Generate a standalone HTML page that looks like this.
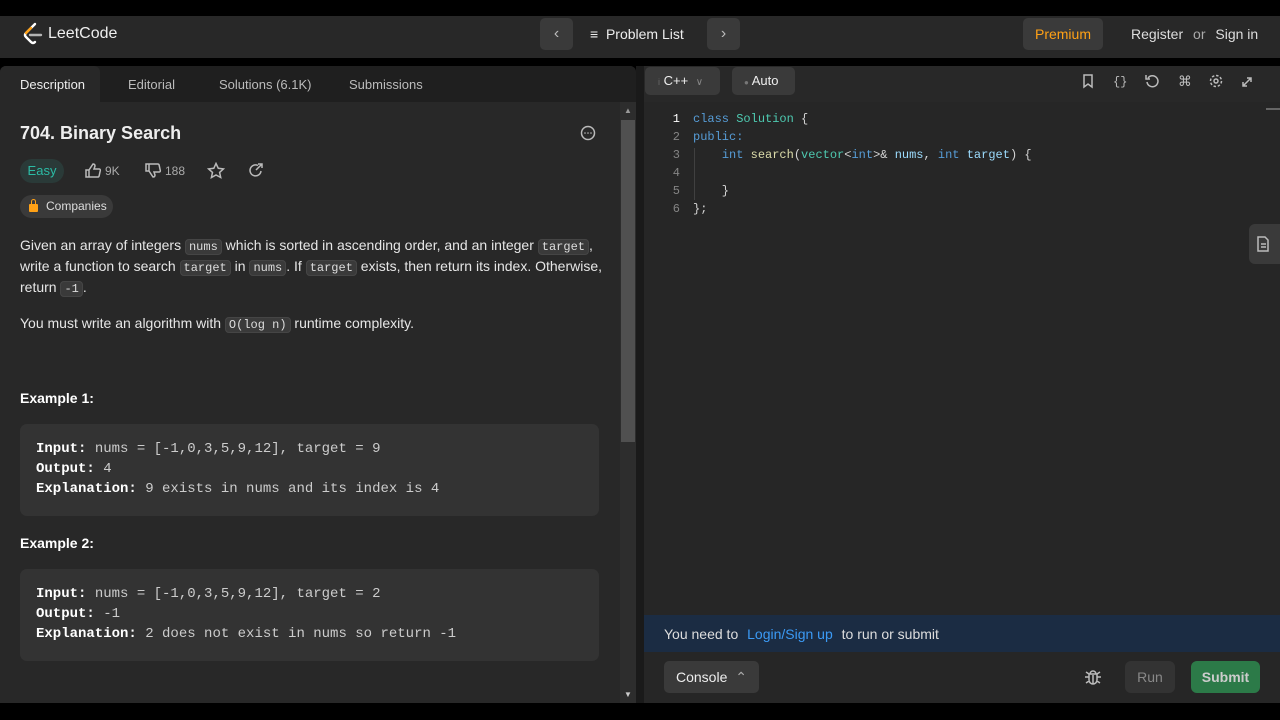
<!DOCTYPE html>
<html><head><meta charset="utf-8"><style>
*{margin:0;padding:0;box-sizing:border-box}
body{width:1280px;height:720px;background:#000;font-family:"Liberation Sans",sans-serif;color:#eee;position:relative;overflow:hidden;font-size:14px}
.abs{position:absolute}
.nav{left:0;top:16px;width:1280px;height:42px;background:#282828}
.btn{background:#3a3a3a;border-radius:5px}
.mono{font-family:"Liberation Mono",monospace}
.code{background:#3a3a3a;border:1px solid #454545;border-radius:4px;font-family:"Liberation Mono",monospace;font-size:12px;padding:0 3px;color:#ddd;line-height:14px}
.ex{left:20px;width:579px;background:#333;border-radius:7px;font-family:"Liberation Mono",monospace;font-size:14px;line-height:20px;padding:15px 16px;color:#ccc}
.ex b{color:#fff}
.ln{color:#858585;width:20px;text-align:right;display:inline-block;margin-right:13px}
.ic{stroke:#bbb;fill:none;stroke-width:1.5}
</style></head><body>
<div class="abs nav"></div>
<svg class="abs" style="left:22px;top:22px" width="22" height="24" viewBox="0 0 22 24"><path d="M13 2 L4 11 Q2 13 4 15 L9 20 Q11 22 13 20" stroke="#fff" stroke-width="2.4" fill="none" stroke-linecap="round"/><path d="M8 13 H19" stroke="#b3b3b3" stroke-width="2.4" stroke-linecap="round"/><path d="M4 11 L9 6" stroke="#ffa116" stroke-width="2.4" stroke-linecap="round"/></svg>
<div class="abs" style="left:48px;top:25px;font-size:16px;color:#eee">LeetCode</div>
<div class="abs btn" style="left:540px;top:18px;width:33px;height:32px;color:#bbb;text-align:center;line-height:32px;font-size:16px">&#8249;</div>
<div class="abs" style="left:590px;top:26px;font-size:14px;color:#eee">&#8801;&nbsp;&nbsp;Problem List</div>
<div class="abs btn" style="left:707px;top:18px;width:33px;height:32px;color:#bbb;text-align:center;line-height:32px;font-size:16px">&#8250;</div>
<div class="abs btn" style="left:1023px;top:18px;width:80px;height:32px;color:#ffa116;text-align:center;line-height:32px;font-size:14px">Premium</div>
<div class="abs" style="left:1131px;top:26px;font-size:14px;color:#ddd">Register <span style="color:#aaa;margin:0 6px">or</span> Sign in</div>

<div class="abs" style="left:0;top:66px;width:636px;height:637px;background:#282828;border-radius:6px 6px 0 0"></div>
<div class="abs" style="left:0;top:66px;width:636px;height:36px;background:#1f1f1f;border-radius:6px 6px 0 0"></div>
<div class="abs" style="left:0;top:66px;width:100px;height:36px;background:#282828;border-radius:6px 6px 0 0"></div>
<div class="abs" style="left:20px;top:77px;font-size:13px;color:#eee">Description</div>
<div class="abs" style="left:128px;top:77px;font-size:13px;color:#bbb">Editorial</div>
<div class="abs" style="left:219px;top:77px;font-size:13px;color:#bbb">Solutions (6.1K)</div>
<div class="abs" style="left:349px;top:77px;font-size:13px;color:#bbb">Submissions</div>
<div class="abs" style="left:620px;top:102px;width:16px;height:601px;background:#2d2d2d"></div>
<div class="abs" style="left:621px;top:120px;width:14px;height:322px;background:#505050"></div>
<div class="abs" style="left:624px;top:106px;font-size:8px;color:#999">&#9650;</div>
<div class="abs" style="left:624px;top:690px;font-size:8px;color:#ccc">&#9660;</div>
<div class="abs" style="left:636px;top:66px;width:8px;height:637px;background:#1a1a1a"></div>

<div class="abs" style="left:20px;top:123px;font-size:18px;font-weight:bold;color:#eee">704. Binary Search</div>
<svg class="abs" style="left:580px;top:125px" width="16" height="16"><circle cx="8" cy="8" r="6.5" class="ic"/><circle cx="5" cy="8" r=".8" fill="#bbb"/><circle cx="8" cy="8" r=".8" fill="#bbb"/><circle cx="11" cy="8" r=".8" fill="#bbb"/></svg>
<div class="abs" style="left:20px;top:159px;width:44px;height:24px;border-radius:12px;background:#2a3a38;color:#2cbba5;font-size:13px;line-height:24px;text-align:center">Easy</div>
<svg class="abs" style="left:84px;top:162px" width="18" height="17"><path class="ic" d="M2 8h3v7H2zM5 8l4-6q2 0 2 2l-1 3h5q1.5 0 1.3 1.5l-1.2 5.5q-.3 1-1.3 1H5"/></svg>
<div class="abs" style="left:105px;top:164px;font-size:12px;color:#aaa">9K</div>
<svg class="abs" style="left:144px;top:162px" width="18" height="17"><path class="ic" d="M2 9h3V2H2zM5 9l4 6q2 0 2-2l-1-3h5q1.5 0 1.3-1.5L15.1 3q-.3-1-1.3-1H5"/></svg>
<div class="abs" style="left:165px;top:164px;font-size:12px;color:#aaa">188</div>
<svg class="abs" style="left:207px;top:162px" width="18" height="17"><path class="ic" d="M9 1.5l2.3 4.8 5.2.6-3.9 3.5 1.1 5.1L9 13l-4.6 2.5 1.1-5.1L1.6 6.9l5.2-.6z"/></svg>
<svg class="abs" style="left:248px;top:162px" width="17" height="17"><path class="ic" d="M13 9a5.5 5.5 0 1 1-3-5.5M10 2h4v4M14 2 8 8"/></svg>
<div class="abs" style="left:20px;top:195px;width:93px;height:23px;border-radius:12px;background:#3a3a3a;font-size:12px;line-height:23px;color:#ddd;padding-left:26px">Companies</div>
<div class="abs" style="left:29px;top:204px;width:9px;height:8px;background:#ffa116;border-radius:1px"></div>
<div class="abs" style="left:31px;top:199px;width:5px;height:6px;border:1.5px solid #ffa116;border-bottom:none;border-radius:3px 3px 0 0"></div>

<div class="abs" style="left:20px;top:235px;width:590px;font-size:14px;line-height:21px;color:#e6e6e6">Given an array of integers <span class="code">nums</span> which is sorted in ascending order, and an integer <span class="code">target</span>, write a function to search <span class="code">target</span> in <span class="code">nums</span>. If <span class="code">target</span> exists, then return its index. Otherwise, return <span class="code">-1</span>.</div>
<div class="abs" style="left:20px;top:315px;font-size:14px;color:#e6e6e6">You must write an algorithm with <span class="code">O(log n)</span> runtime complexity.</div>
<div class="abs" style="left:20px;top:390px;font-size:14px;font-weight:bold;color:#fff">Example 1:</div>
<div class="abs ex" style="top:424px;height:92px"><b>Input:</b> nums = [-1,0,3,5,9,12], target = 9<br><b>Output:</b> 4<br><b>Explanation:</b> 9 exists in nums and its index is 4</div>
<div class="abs" style="left:20px;top:535px;font-size:14px;font-weight:bold;color:#fff">Example 2:</div>
<div class="abs ex" style="top:569px;height:92px"><b>Input:</b> nums = [-1,0,3,5,9,12], target = 2<br><b>Output:</b> -1<br><b>Explanation:</b> 2 does not exist in nums so return -1</div>

<div class="abs" style="left:644px;top:66px;width:636px;height:637px;background:#262626;border-radius:6px 0 0 0"></div>
<div class="abs" style="left:644px;top:66px;width:636px;height:36px;background:#282828"></div>
<div class="abs btn" style="left:645px;top:67px;width:75px;height:28px;font-size:13px;line-height:28px;padding-left:13px;color:#eee"><span style="color:#666;font-size:9px">i</span> C++ <span style="color:#888;font-size:10px;margin-left:4px">&#8744;</span></div>
<div class="abs btn" style="left:732px;top:67px;width:63px;height:28px;font-size:13px;line-height:28px;padding-left:12px;color:#eee"><span style="color:#777;font-size:8px">&#9679;</span> Auto</div>
<svg class="abs" style="left:1080px;top:73px" width="180" height="16">
<path class="ic" d="M4 2h8v12l-4-3-4 3z"/>
<text x="33" y="12" fill="#bbb" font-size="12" font-family="Liberation Mono">{}</text>
<path class="ic" d="M68 5a5.5 5.5 0 1 1-1 4M66 2v4h4"/>
<text x="98" y="13" fill="#bbb" font-size="14" font-family="DejaVu Sans">&#8984;</text>
<circle cx="136" cy="8" r="2" class="ic"/><circle cx="136" cy="8" r="5.5" class="ic" stroke-dasharray="2.5 1.8"/>
<path class="ic" d="M163 13l8-8M167 5h4v4M163 9v4h4"/>
</svg>
<div class="abs" style="left:1266px;top:108px;width:14px;height:2px;background:#666"></div>
<div class="abs" style="left:1249px;top:224px;width:31px;height:40px;background:#3a3a3a;border-radius:6px 0 0 6px"></div>
<svg class="abs" style="left:1256px;top:236px" width="14" height="16"><path class="ic" d="M2 1h7l3 3v11H2zM5 8h5M5 11h5"/></svg>
<div class="abs mono" style="left:660px;top:110px;font-size:12px;line-height:18px;color:#d4d4d4;white-space:pre"><span class="ln" style="color:#fff">1</span><span style="color:#569cd6">class</span> <span style="color:#4ec9b0">Solution</span> {
<span class="ln">2</span><span style="color:#569cd6">public:</span>
<span class="ln">3</span>    <span style="color:#569cd6">int</span> <span style="color:#dcdcaa">search</span>(<span style="color:#4ec9b0">vector</span>&lt;<span style="color:#569cd6">int</span>&gt;&amp; <span style="color:#9cdcfe">nums</span>, <span style="color:#569cd6">int</span> <span style="color:#9cdcfe">target</span>) {
<span class="ln">4</span>
<span class="ln">5</span>    }
<span class="ln">6</span>};</div>
<div class="abs" style="left:694px;top:148px;width:1px;height:52px;background:#404040"></div>
<div class="abs" style="left:644px;top:615px;width:636px;height:37px;background:#1b2c43"></div>
<div class="abs" style="left:664px;top:626px;font-size:14px;color:#ddd">You need to <span style="color:#3b9af5;margin:0 5px">Login/Sign up</span> to run or submit</div>
<div class="abs btn" style="left:664px;top:661px;width:95px;height:32px;font-size:14px;line-height:32px;padding-left:12px;color:#eee">Console <span style="color:#aaa;margin-left:4px">&#8963;</span></div>
<svg class="abs" style="left:1083px;top:667px" width="20" height="20"><path class="ic" stroke="#888" d="M6 7h8v6a4 4 0 0 1-8 0zM7 7a3 3 0 0 1 6 0M2 10h4M14 10h4M3 5l3 2M17 5l-3 2M3 16l3-2M17 16l-3-2M10 8v9"/></svg>
<div class="abs" style="left:1125px;top:661px;width:50px;height:32px;background:#333;border-radius:6px;font-size:14px;line-height:32px;text-align:center;color:#888">Run</div>
<div class="abs" style="left:1191px;top:661px;width:69px;height:32px;background:#2c7a48;border-radius:6px;font-size:14px;line-height:32px;text-align:center;color:#ccc;font-weight:bold">Submit</div>
</body></html>
